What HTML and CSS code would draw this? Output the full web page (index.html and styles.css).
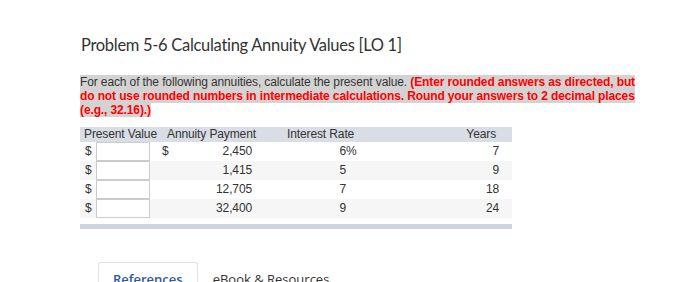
FILE: index.html
```html
<!DOCTYPE html>
<html>
<head>
<meta charset="utf-8">
<link rel="stylesheet" href="styles.css">
</head>
<body>
<div class="page">
  <h1 class="title">Problem 5-6 Calculating Annuity Values [LO 1]</h1>
  <p class="instructions"><span class="hl">For each of the following annuities, calculate the present value. <b class="warn">(Enter rounded answers as directed, but do not use rounded numbers in intermediate calculations. Round your answers to 2 decimal places (e.g., 32.16).)</b></span></p>
  <div class="table-wrap">
    <table class="grid">
      <colgroup>
        <col class="c-dollar"><col class="c-input"><col class="c-dollar2"><col class="c-pay"><col class="c-rate"><col class="c-pct"><col class="c-years">
      </colgroup>
      <thead>
        <tr>
          <th colspan="2" class="h-pv">Present Value</th>
          <th colspan="2" class="h-pay">Annuity Payment</th>
          <th colspan="2" class="h-rate">Interest Rate</th>
          <th class="h-years">Years</th>
        </tr>
      </thead>
      <tbody>
        <tr>
          <td class="cur">$</td><td class="inp"><input type="text"></td><td class="cur2">$</td><td class="num">2,450</td><td class="rate">6</td><td class="pct">%</td><td class="years">7</td>
        </tr>
        <tr class="alt">
          <td class="cur">$</td><td class="inp"><input type="text"></td><td class="cur2"></td><td class="num">1,415</td><td class="rate">5</td><td class="pct"></td><td class="years">9</td>
        </tr>
        <tr>
          <td class="cur">$</td><td class="inp"><input type="text"></td><td class="cur2"></td><td class="num">12,705</td><td class="rate">7</td><td class="pct"></td><td class="years">18</td>
        </tr>
        <tr class="alt">
          <td class="cur">$</td><td class="inp"><input type="text"></td><td class="cur2"></td><td class="num">32,400</td><td class="rate">9</td><td class="pct"></td><td class="years">24</td>
        </tr>
      </tbody>
    </table>
    <div class="table-foot"></div>
  </div>
  <div class="tabs">
    <div class="tab active">References</div>
    <div class="tab">eBook &amp; Resources</div>
  </div>
</div>
</body>
</html>
```
FILE: styles.css
```css
html, body {
  margin: 0;
  padding: 0;
  background: #ffffff;
}
body {
  overflow: hidden;
  height: 282px;
}
.page {
  padding: 33px 0 0 80px;
}
.title {
  margin: 0;
  font-family: "Lato", "Open Sans", sans-serif;
  font-weight: 400;
  font-size: 16.5px;
  letter-spacing: -0.3px;
  font-variant-ligatures: none;
  line-height: 24px;
  color: #333333;
  padding-left: 1px;
}
.instructions {
  margin: 18px 0 0 0;
  width: 560px;
  font-family: "Liberation Sans", Arial, sans-serif;
  font-size: 12px;
  letter-spacing: -0.12px;
  color: #333333;
}
.hl {
  background: #d3d3d3;
}
.warn {
  color: #ff0000;
  font-weight: 700;
}
.table-wrap {
  margin-top: 10px;
  width: 432px;
}
.grid {
  border-collapse: collapse;
  table-layout: fixed;
  width: 432px;
  font-family: "Liberation Sans", Arial, sans-serif;
  font-size: 12px;
  letter-spacing: -0.12px;
  color: #333333;
}
.c-dollar { width: 16px; }
.c-input { width: 56px; }
.c-dollar2 { width: 20px; }
.c-pay { width: 84px; }
.c-rate { width: 90px; }
.c-pct { width: 24px; }
.c-years { width: 142px; }
.grid th {
  background: #d9dde5;
  font-weight: 400;
  height: 15px;
  padding: 0;
  line-height: 15px;
  text-align: left;
  white-space: nowrap;
}
.h-pv { padding-left: 4px !important; }
.h-pay { padding-left: 15px !important; }
.h-rate { padding-left: 31px !important; }
.h-years { text-align: right !important; padding-right: 16px !important; }
.grid td {
  padding: 0;
  height: 19px;
  line-height: 19px;
  white-space: nowrap;
}
.grid tr.alt td { background: #f6f6f6; }
.cur { padding-left: 5px !important; }
.cur2 { padding-left: 10px !important; }
.inp input {
  display: block;
  box-sizing: border-box;
  width: 54px;
  height: 19px;
  margin: 0;
  border: 1px solid #cccccc;
  background: #ffffff;
  padding: 0 2px;
}
.num { text-align: right; padding-right: 4px !important; }
.rate { text-align: right; }
.pct { text-align: left; }
.years { text-align: right; padding-right: 13px !important; }
.table-foot {
  height: 5px;
  margin-top: 6px;
  background: #cdd5e0;
}
.tabs {
  display: flex;
  margin-top: 33px;
  padding-left: 18px;
  font-family: "Open Sans", sans-serif;
  font-size: 13px;
}
.tab {
  padding: 7px 14px;
  color: #333333;
  border: 1px solid transparent;
  border-bottom: none;
  border-radius: 3px 3px 0 0;
}
.tab.active {
  border-color: #e3e3e3;
  color: #2a5aa6;
  font-weight: 600;
}
```
